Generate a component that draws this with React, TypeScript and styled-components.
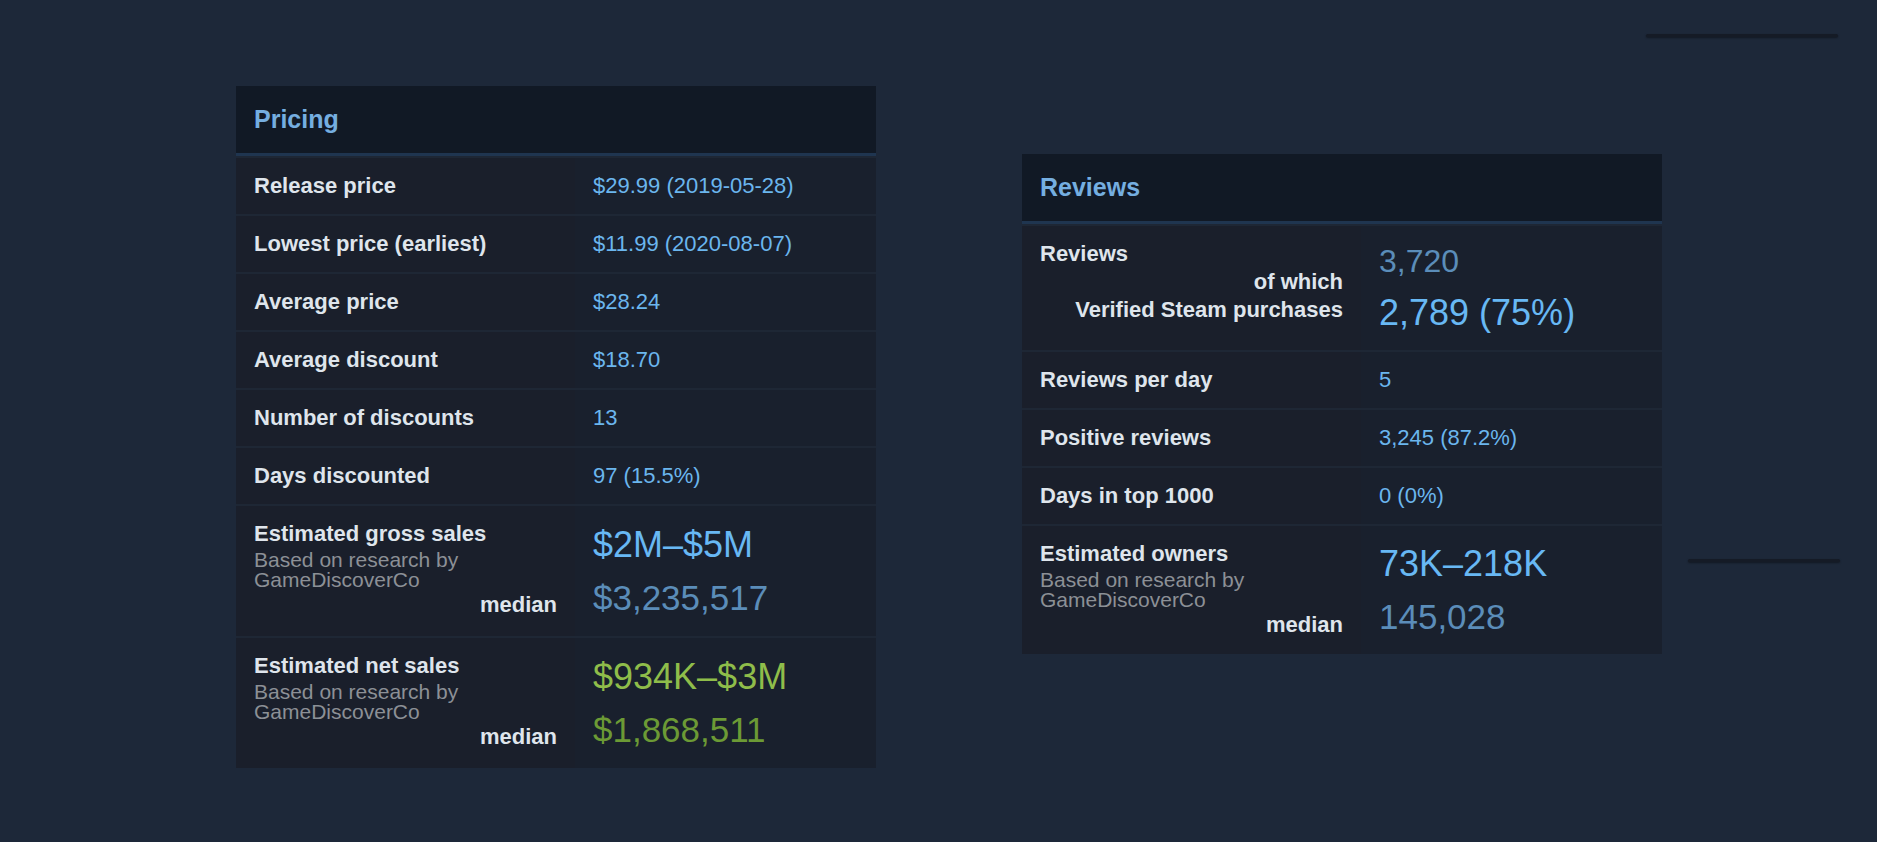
import styled, { createGlobalStyle } from "styled-components";

const GlobalStyle = createGlobalStyle`
  html, body { margin: 0; padding: 0; background: #1d2839; }
  body { font-family: "Liberation Sans", Arial, sans-serif; }
  *, *::before, *::after { box-sizing: border-box; }
`;

type Row = {
  label: string;
  value: string;
};

const pricingRows: Row[] = [
  { label: "Release price", value: "$29.99 (2019-05-28)" },
  { label: "Lowest price (earliest)", value: "$11.99 (2020-08-07)" },
  { label: "Average price", value: "$28.24" },
  { label: "Average discount", value: "$18.70" },
  { label: "Number of discounts", value: "13" },
  { label: "Days discounted", value: "97 (15.5%)" },
];

const reviewRows: Row[] = [
  { label: "Reviews per day", value: "5" },
  { label: "Positive reviews", value: "3,245 (87.2%)" },
  { label: "Days in top 1000", value: "0 (0%)" },
];

export default function App() {
  return (
    <>
      <GlobalStyle />
      <Page>
        <TopLine />
        <SideLine />
        <Table>
          <Header>Pricing</Header>
          {pricingRows.map((r) => (
            <PlainRow key={r.label}>
              <LabelCell>{r.label}</LabelCell>
              <ValueCell>{r.value}</ValueCell>
            </PlainRow>
          ))}
          <EstimateRow
            title="Estimated gross sales"
            range="$2M–$5M"
            median="$3,235,517"
            $tone="blue"
          />
          <EstimateRow
            title="Estimated net sales"
            range="$934K–$3M"
            median="$1,868,511"
            $tone="green"
          />
        </Table>

        <Table $offset={68}>
          <Header>Reviews</Header>
          <TallRow $h={126}>
            <LabelCell $stack>
              <span>Reviews</span>
              <RightLabel>of which</RightLabel>
              <RightLabel>Verified Steam purchases</RightLabel>
            </LabelCell>
            <ValueCell $stack>
              <Muted $size={32}>3,720</Muted>
              <Bright $size={36}>2,789 (75%)</Bright>
            </ValueCell>
          </TallRow>
          {reviewRows.map((r) => (
            <PlainRow key={r.label}>
              <LabelCell>{r.label}</LabelCell>
              <ValueCell>{r.value}</ValueCell>
            </PlainRow>
          ))}
          <EstimateRow
            title="Estimated owners"
            range="73K–218K"
            median="145,028"
            $tone="blue"
            last
          />
        </Table>
      </Page>
    </>
  );
}

function EstimateRow({
  title,
  range,
  median,
  $tone,
  last,
}: {
  title: string;
  range: string;
  median: string;
  $tone: "blue" | "green";
  last?: boolean;
}) {
  return (
    <TallRow $h={last ? 130 : 132}>
      <LabelCell $stack>
        <span>{title}</span>
        <Source>
          Based on research by
          <br />
          GameDiscoverCo
        </Source>
        <RightLabel>median</RightLabel>
      </LabelCell>
      <ValueCell $stack>
        {$tone === "blue" ? (
          <>
            <Bright $size={36}>{range}</Bright>
            <Muted $size={35}>{median}</Muted>
          </>
        ) : (
          <>
            <Green $size={36}>{range}</Green>
            <DarkGreen $size={35}>{median}</DarkGreen>
          </>
        )}
      </ValueCell>
    </TallRow>
  );
}

/* ---------- styled ---------- */
const Page = styled.div`
  position: relative;
  width: 1877px;
  height: 842px;
  display: flex;
  align-items: flex-start;
  gap: 146px;
  padding: 86px 0 0 236px;
  overflow: hidden;
`;

const TopLine = styled.div`
  position: absolute;
  left: 1646px;
  top: 34px;
  width: 192px;
  height: 3px;
  border-radius: 2px;
  background: #151b26;
  box-shadow: 0 1px 2px rgba(0, 0, 0, 0.4);
`;

const SideLine = styled(TopLine)`
  left: 1688px;
  top: 559px;
  width: 152px;
`;

const Table = styled.div<{ $offset?: number }>`
  width: 640px;
  margin-top: ${({ $offset }) => $offset ?? 0}px;
  display: flex;
  flex-direction: column;
  background: #1a202c;
`;

const Header = styled.div`
  height: 70px;
  display: flex;
  align-items: center;
  padding-left: 18px;
  background: #111925;
  border-bottom: 3px solid #1f3550;
  color: #75aee0;
  font-weight: bold;
  font-size: 25px;
`;

const PlainRow = styled.div`
  display: grid;
  grid-template-columns: 339px 1fr;
  height: 58px;
  border-top: 2px solid #1e2735;
`;

const TallRow = styled(PlainRow)<{ $h: number }>`
  height: ${({ $h }) => $h}px;
`;

const LabelCell = styled.div<{ $stack?: boolean }>`
  display: flex;
  flex-direction: ${({ $stack }) => ($stack ? "column" : "row")};
  align-items: ${({ $stack }) => ($stack ? "stretch" : "center")};
  padding: ${({ $stack }) => ($stack ? "14px 18px 0 18px" : "0 18px")};
  background: #1a1f2b;
  color: #dfe5ec;
  font-weight: bold;
  font-size: 22px;
  line-height: 28px;
`;

const RightLabel = styled.span`
  text-align: right;
`;

const Source = styled.span`
  color: #8c9096;
  font-weight: normal;
  font-size: 21px;
  line-height: 20px;
  margin: 2px 0 1px;
`;

const ValueCell = styled.div<{ $stack?: boolean }>`
  display: flex;
  flex-direction: ${({ $stack }) => ($stack ? "column" : "row")};
  justify-content: ${({ $stack }) => ($stack ? "center" : "flex-start")};
  align-items: ${({ $stack }) => ($stack ? "flex-start" : "center")};
  gap: ${({ $stack }) => ($stack ? "14px" : "0")};
  padding: 0 18px;
  background: #19202d;
  color: #6bb6ee;
  font-size: 22px;
`;

const Big = styled.span<{ $size: number }>`
  font-size: ${({ $size }) => $size}px;
  line-height: 1.1;
`;

const Bright = styled(Big)`
  color: #68b8f4;
`;

const Muted = styled(Big)`
  color: #5b8db9;
`;

const Green = styled(Big)`
  color: #8fbd4a;
`;

const DarkGreen = styled(Big)`
  color: #6c9a35;
`;
